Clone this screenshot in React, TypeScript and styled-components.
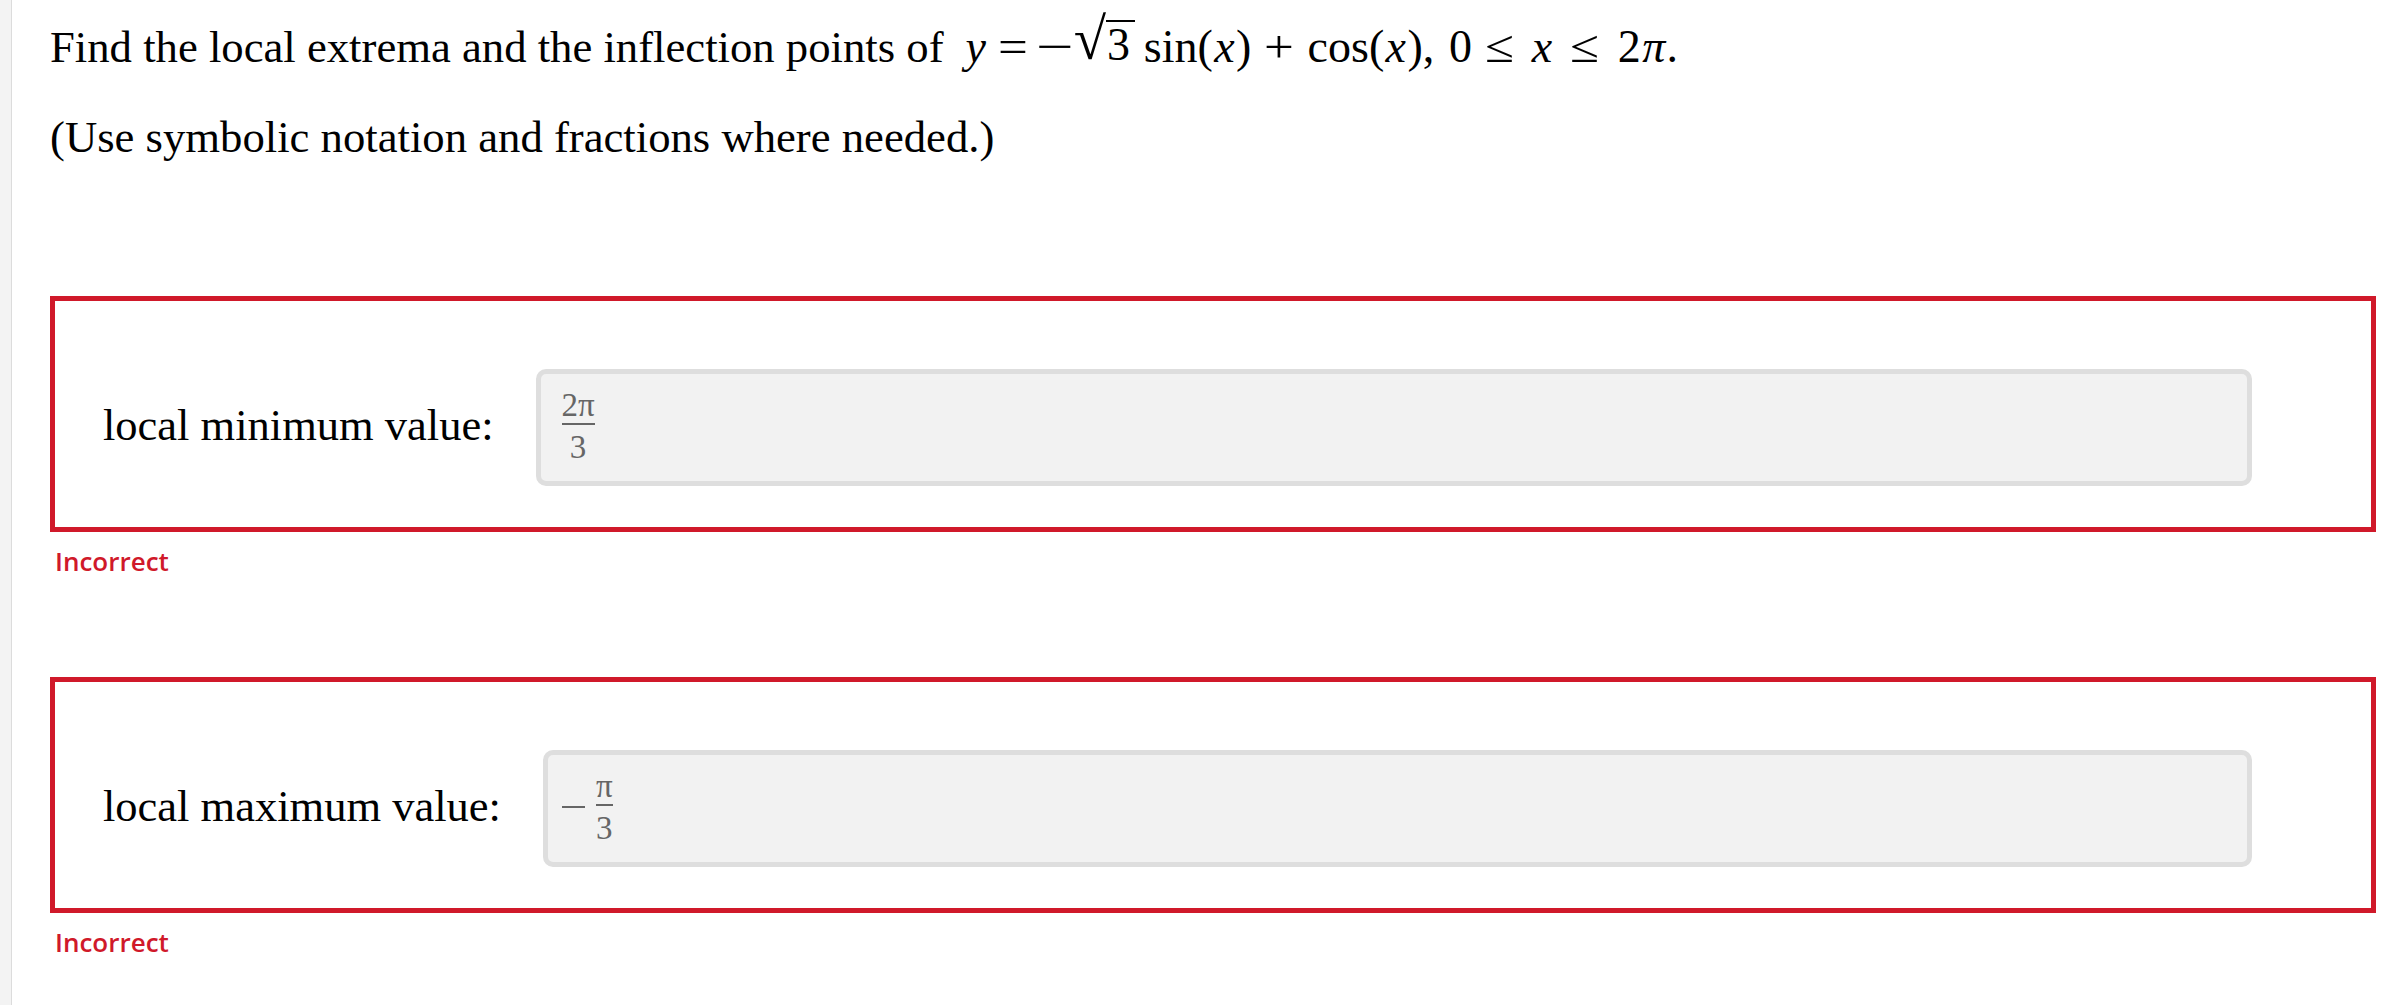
import * as React from 'react';
import styled, { createGlobalStyle } from 'styled-components';

const GlobalStyle = createGlobalStyle`
  html, body {
    margin: 0;
    padding: 0;
    background: #fff;
  }
  body {
    font-family: 'Liberation Serif', 'Times New Roman', serif;
    color: #000;
  }
`;

const Page = styled.div`
  display: flex;
  min-height: 1005px;
`;

const SideStrip = styled.div`
  width: 11px;
  flex: none;
  background: #f3f3f3;
  border-right: 1px solid #dcdcdc;
`;

const Main = styled.main`
  flex: 1;
  padding: 2px 9px 0 38px;
`;

const Prompt = styled.p`
  margin: 0;
  font-size: 44.7px;
  line-height: 90px;
  white-space: nowrap;
`;

// inline math: a touch larger than the prose, with TeX-like spacing
const MathSpan = styled.span`
  font-size: 46px;
  margin-left: 0.2em;
`;

const Var = styled.i`
  font-style: italic;
  padding: 0 0.03em;
`;

const Op = styled.span<{ $l?: number; $r?: number; $sx?: number }>`
  display: inline-block;
  margin: 0 ${p => p.$r ?? 0}em 0 ${p => p.$l ?? 0}em;
  transform: scaleX(${p => p.$sx ?? 1.15});
`;

const Punct = styled.span`
  margin-right: 0.07em;
`;

const Radical = styled.span`
  display: inline-flex;
  align-items: flex-start;
  margin: 0 0.2em 0 0.12em;
`;

const RadicalSign = styled.span`
  font-size: 1.28em;
  line-height: 1;
  transform: translateY(-0.05em);
`;

const Radicand = styled.span`
  border-top: 2px solid #000;
  line-height: 1.02;
  margin-top: 0.14em;
  padding: 0 0.1em 0 0.02em;
`;

const AnswerBox = styled.section<{ $top: number }>`
  margin-top: ${p => p.$top}px;
  border: 5px solid #d0192a;
  padding: 68px 0 41px 0;
`;

const Row = styled.div`
  display: flex;
  align-items: center;
`;

const Label = styled.span`
  font-size: 44.5px;
  padding-left: 48px;
  margin-bottom: 5px;
  white-space: nowrap;
`;

const AnswerField = styled.div`
  flex: 1;
  height: 117px;
  box-sizing: border-box;
  margin: 0 119px 0 42px;
  padding: 0 0 4px 18px;
  background: #f2f2f2;
  border: 5px solid #dedede;
  border-radius: 10px;
  display: flex;
  align-items: center;
  color: #666;
  font-size: 33px;
`;

const Minus = styled.span`
  display: inline-block;
  width: 23px;
  height: 2px;
  background: #666;
  margin: 0 8px 0 -4px;
`;

const Fraction = styled.span`
  display: inline-flex;
  flex-direction: column;
  align-items: center;
  padding: 0 3px;
`;

const Numerator = styled.span`
  line-height: 32px;
`;

const Bar = styled.span`
  align-self: stretch;
  height: 2px;
  background: #666;
  margin: 2px 0 6px;
`;

const Denominator = styled.span`
  line-height: 32px;
`;

const Feedback = styled.div`
  font-family: 'Open Sans', 'Noto Sans', sans-serif;
  font-size: 26px;
  font-weight: 600;
  line-height: 37px;
  color: #d0192a;
  margin-top: 11px;
  padding-left: 5px;
`;

type Answer = {
  label: string;
  negative?: boolean;
  numerator: React.ReactNode;
  denominator: string;
  top: number;
};

const answers: Answer[] = [
  { label: 'local minimum value:', numerator: <>2π</>, denominator: '3', top: 114 },
  { label: 'local maximum value:', negative: true, numerator: <>π</>, denominator: '3', top: 97 }
];

const Problem = () => (
  <>
    <Prompt>
      Find the local extrema and the inflection points of
      <MathSpan>
        {' '}<Var>y</Var>
        <Op $l={0.28} $r={0.35}>=</Op><Op $sx={1.45}>−</Op>
        <Radical><RadicalSign>√</RadicalSign><Radicand>3</Radicand></Radical>
        sin(<Var>x</Var>)
        <Op $l={0.33} $r={0.33}>+</Op>cos(<Var>x</Var>)<Punct>,</Punct>{' '}0
        <Op $l={0.32} $r={0.4}>≤</Op><Var>x</Var><Op $l={0.4} $r={0.45}>≤</Op>2<Var>π</Var>.
      </MathSpan>
    </Prompt>
    <Prompt>(Use symbolic notation and fractions where needed.)</Prompt>
  </>
);

export default function App() {
  return (
    <>
      <GlobalStyle />
      <Page>
        <SideStrip />
        <Main>
          <Problem />
          {answers.map(a => (
            <React.Fragment key={a.label}>
              <AnswerBox $top={a.top}>
                <Row>
                  <Label>{a.label}</Label>
                  <AnswerField>
                    {a.negative && <Minus />}
                    <Fraction>
                      <Numerator>{a.numerator}</Numerator>
                      <Bar />
                      <Denominator>{a.denominator}</Denominator>
                    </Fraction>
                  </AnswerField>
                </Row>
              </AnswerBox>
              <Feedback>Incorrect</Feedback>
            </React.Fragment>
          ))}
        </Main>
      </Page>
    </>
  );
}
